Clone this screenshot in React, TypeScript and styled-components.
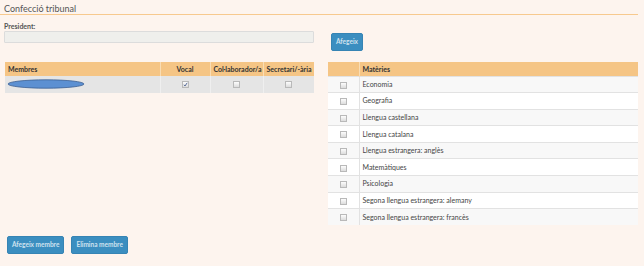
import styled, { createGlobalStyle } from 'styled-components';

const Global = createGlobalStyle`
  body {
    margin: 0;
    background: #fdf4ee;
    font-family: Lato, "Open Sans", sans-serif;
    color: #444;
  }
`;

const Page = styled.div`
  width: 644px;
  height: 266px;
  padding: 0 6px 0 4px;
  box-sizing: border-box;
`;

const Title = styled.div`
  font-size: 9px;
  color: #555;
  padding: 4px 0 1px 4px;
  margin-left: -4px;
  border-bottom: 1.5px solid #f7c98e;
  line-height: 9px;
`;

const Grid = styled.div`
  display: grid;
  grid-template-columns: 310px 310px;
  column-gap: 14px;
  align-items: start;
`;

const Field = styled.div`
  display: flex;
  flex-direction: column;
  padding-top: 7px;
`;

const Label = styled.label`
  font-size: 7px;
  font-weight: 700;
  color: #555;
  line-height: 8px;
  margin-bottom: 1px;
`;

const Input = styled.div`
  height: 12px;
  box-sizing: border-box;
  border: 1px solid #dcdcdc;
  background: #efefec;
  border-radius: 1px;
`;

const Button = styled.button`
  font-family: Lato, "Open Sans", sans-serif;
  font-size: 6.5px;
  font-weight: 700;
  color: #cfe2ef;
  background: #3b8ec0;
  border: 1px solid #3684b4;
  border-radius: 2px;
  height: 18px;
  padding: 0 4px;
  cursor: pointer;
`;

const TopAction = styled.div`
  padding: 13px 0 0 3px;
`;

const Table = styled.table<{ $offset?: number; $width: number }>`
  border-collapse: collapse;
  width: ${(p) => p.$width}px;
  margin: 11px 0 0 ${(p) => p.$offset ?? 0}px;
  font-size: 7px;
  table-layout: fixed;
`;

const Th = styled.th<{ $align?: string }>`
  background: #f5c585;
  color: #333;
  font-weight: 700;
  text-align: ${(p) => p.$align ?? 'left'};
  height: 14px;
  padding: 0 3px;
  border-left: 1px solid #f9ddb4;
  white-space: nowrap;
  &:first-child {
    border-left: none;
  }
`;

const MemberTd = styled.td<{ $center?: boolean }>`
  background: #e5e5e5;
  height: 17px;
  padding: 0 3px;
  text-align: ${(p) => (p.$center ? 'center' : 'left')};
  border-left: 1px solid #efefef;
  &:first-child {
    border-left: none;
  }
`;

const Row = styled.tr`
  &:nth-child(odd) td {
    background: #f8f8f8;
  }
  &:nth-child(even) td {
    background: #ffffff;
  }
`;

const Td = styled.td<{ $center?: boolean }>`
  height: 15.6px;
  padding: 0 3px;
  line-height: 9px;
  color: #444;
  border-top: 1px solid #e2e2e2;
  text-align: ${(p) => (p.$center ? 'center' : 'left')};
  &:first-child {
    border-right: 1px solid #e2e2e2;
  }
`;

const Box = styled.span`
  display: inline-block;
  width: 7px;
  height: 7px;
  box-sizing: border-box;
  border: 1px solid #b9b9b9;
  background: linear-gradient(#fdfdfd, #dcdcdc);
  vertical-align: middle;
  position: relative;
`;

const Tick = styled.svg`
  position: absolute;
  left: 0;
  top: 0;
`;

const Redacted = styled.svg`
  display: block;
  margin-left: -1px;
`;

const Footer = styled.div`
  display: flex;
  gap: 7px;
  padding: 11px 0 0 3px;
`;

const subjects = [
  'Economia',
  'Geografia',
  'Llengua castellana',
  'Llengua catalana',
  'Llengua estrangera: anglès',
  'Matemàtiques',
  'Psicologia',
  'Segona llengua estrangera: alemany',
  'Segona llengua estrangera: francès',
];

function Check({ checked }: { checked?: boolean }) {
  return (
    <Box>
      {checked && (
        <Tick width="5" height="5" viewBox="0 0 5 5">
          <path d="M1 2.8 L2 4 L4.2 0.8" stroke="#4a5f90" strokeWidth="0.9" fill="none" />
        </Tick>
      )}
    </Box>
  );
}

export default function App() {
  return (
    <>
      <Global />
      <Page>
        <Title>Confecció tribunal</Title>
        <Grid>
          <Field>
            <Label>President:</Label>
            <Input />
          </Field>
          <TopAction>
            <Button>Afegeix</Button>
          </TopAction>

          <Table $offset={1} $width={309}>
            <colgroup>
              <col style={{ width: 155 }} />
              <col style={{ width: 50 }} />
              <col style={{ width: 53 }} />
              <col style={{ width: 51 }} />
            </colgroup>
            <thead>
              <tr>
                <Th>Membres</Th>
                <Th $align="center">Vocal</Th>
                <Th $align="center">Col·laborador/a</Th>
                <Th $align="center">Secretari/-ària</Th>
              </tr>
            </thead>
            <tbody>
              <tr>
                <MemberTd>
                  <Redacted width="78" height="10" viewBox="0 0 78 10">
                    <ellipse cx="39" cy="5" rx="38" ry="4.2" fill="#5c90d2" stroke="#3c5f92" strokeWidth="0.8" />
                  </Redacted>
                </MemberTd>
                <MemberTd $center>
                  <Check checked />
                </MemberTd>
                <MemberTd $center>
                  <Check />
                </MemberTd>
                <MemberTd $center>
                  <Check />
                </MemberTd>
              </tr>
            </tbody>
          </Table>

          <Table $width={310}>
            <colgroup>
              <col style={{ width: 31 }} />
              <col />
            </colgroup>
            <thead>
              <tr>
                <Th />
                <Th>Matèries</Th>
              </tr>
            </thead>
            <tbody>
              {subjects.map((s) => (
                <Row key={s}>
                  <Td $center>
                    <Check />
                  </Td>
                  <Td>{s}</Td>
                </Row>
              ))}
            </tbody>
          </Table>
        </Grid>
        <Footer>
          <Button>Afegeix membre</Button>
          <Button>Elimina membre</Button>
        </Footer>
      </Page>
    </>
  );
}
